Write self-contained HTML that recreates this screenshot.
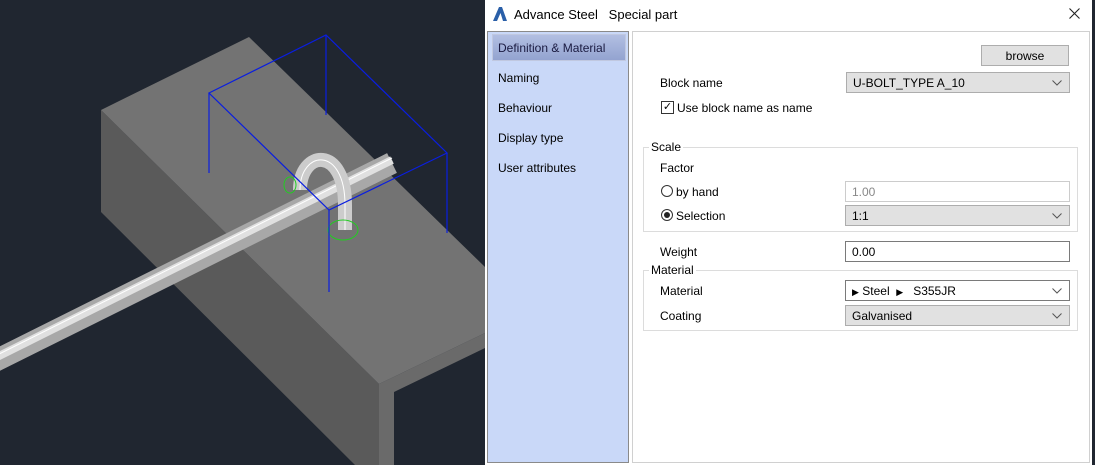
<!DOCTYPE html>
<html><head><meta charset="utf-8"><style>
body{margin:0;width:1095px;height:465px;overflow:hidden;background:#202630;font-family:"Liberation Sans",sans-serif;font-size:12px;color:#000;position:relative}
.a{position:absolute}
.dlg{left:485px;top:0;width:607px;height:465px;background:#fff}
.nav{left:487px;top:31px;width:142px;height:432px;background:#c9d8f8;border:1px solid #8a8a8a;box-sizing:border-box}
.it{position:absolute;left:10px}
.sel{position:absolute;left:4px;top:2px;width:134px;height:27px;background:linear-gradient(#b2bfe2,#93a3d0);border:1px solid #c0c8e0;box-sizing:border-box}
.cont{left:632px;top:31px;width:458px;height:432px;border:1px solid #d0d0d0;box-sizing:border-box;background:#fff}
.box{position:absolute;box-sizing:border-box;border:1px solid #adadad;background:#fff;height:21px;padding:3px 6px;font-size:12px}
.cb{background:#e1e1e1}
.chev{position:absolute;right:7px;top:7px;width:10px;height:6px}
.grp{position:absolute;border:1px solid #dcdcdc;box-sizing:border-box}
.gl{position:absolute;background:#fff;padding:0 2px}
.rad{position:absolute;width:12px;height:12px;border:1px solid #333;border-radius:50%;box-sizing:border-box;background:#fff}
</style></head><body>
<svg class="a" style="left:0;top:0" width="485" height="465">
<polygon points="101,110 379,384 379,465 355,465 101,212" fill="#5a5a5a"/>
<polygon points="379,384 485,333 485,348 394,392 394,465 379,465" fill="#6a6a6a"/>
<polygon points="101,110 249,37 485,267 485,333 379,384" fill="#737373"/>
<defs><linearGradient id="pg" x1="0" y1="0" x2="0.4" y2="1"><stop offset="0" stop-color="#8a8a8a"/><stop offset="0.45" stop-color="#e8e8e8"/><stop offset="1" stop-color="#7a7a7a"/></linearGradient></defs>
<line x1="-5" y1="361" x2="392" y2="163" stroke="#a8a8a8" stroke-width="22"/>
<line x1="-5" y1="358" x2="392" y2="160" stroke="#e0e0e0" stroke-width="8"/>
<line x1="-5" y1="356" x2="392" y2="158" stroke="#fff" stroke-width="1"/>
<path d="M300,190 C300,150 345,145 345,205 L345,230" fill="none" stroke="#ccc" stroke-width="14"/>
<path d="M300,190 C300,150 345,145 345,205 L345,230" fill="none" stroke="#fff" stroke-width="1"/>
<ellipse cx="290" cy="185" rx="6" ry="8" fill="none" stroke="#2c2" stroke-width="1"/>
<ellipse cx="343" cy="230" rx="15" ry="10" fill="none" stroke="#2c2" stroke-width="1"/>
<g stroke="#0a1ee0" stroke-width="1.2" fill="none">
<polygon points="209,93 326,35 447,153 329,210"/>
<line x1="209" y1="93" x2="209" y2="173"/><line x1="326" y1="35" x2="326" y2="115"/>
<line x1="447" y1="153" x2="447" y2="233"/><line x1="329" y1="210" x2="329" y2="292"/>
</g>
</svg>
<div class="a dlg"></div>
<svg class="a" style="left:492px;top:6px" width="16" height="16"><polygon points="1,15 7,1 10,1 15,15 11,15 8.5,7 5,15" fill="#2a5fa8"/></svg>
<div class="a" style="left:514px;top:7px;font-size:13px">Advance Steel&nbsp;&nbsp;&nbsp;Special part</div>
<svg class="a" style="left:1069px;top:8px" width="11" height="11"><path d="M0.5,0.5 L10.5,10.5 M10.5,0.5 L0.5,10.5" stroke="#222" stroke-width="1.1"/></svg>
<div class="a nav">
<div class="sel"></div>
<div class="it" style="top:9px;color:#1a1a40">Definition &amp; Material</div>
<div class="it" style="top:39px">Naming</div>
<div class="it" style="top:69px">Behaviour</div>
<div class="it" style="top:99px">Display type</div>
<div class="it" style="top:129px">User attributes</div>
</div>
<div class="a cont"></div>
<div class="box cb" style="left:981px;top:45px;width:88px;text-align:center">browse</div>
<div class="a" style="left:660px;top:76px">Block name</div>
<div class="box cb" style="left:846px;top:72px;width:224px">U-BOLT_TYPE A_10<svg class="chev"><path d="M0.5,0.5 L5,5 L9.5,0.5" fill="none" stroke="#555"/></svg></div>
<div class="a" style="left:661px;top:101px;width:13px;height:13px;border:1px solid #333;box-sizing:border-box;font-size:11px;line-height:11px;text-align:center">✓</div>
<div class="a" style="left:677px;top:101px">Use block name as name</div>
<div class="grp" style="left:643px;top:147px;width:435px;height:85px"></div>
<div class="gl" style="left:649px;top:140px">Scale</div>
<div class="a" style="left:660px;top:161px">Factor</div>
<div class="rad" style="left:661px;top:185px"></div><div class="a" style="left:676px;top:185px">by hand</div>
<div class="box" style="left:845px;top:181px;width:225px;color:#888;border-color:#ccc">1.00</div>
<div class="rad" style="left:661px;top:209px"><div style="position:absolute;left:2px;top:2px;width:6px;height:6px;border-radius:50%;background:#222"></div></div>
<div class="a" style="left:676px;top:209px">Selection</div>
<div class="box cb" style="left:845px;top:205px;width:225px">1:1<svg class="chev"><path d="M0.5,0.5 L5,5 L9.5,0.5" fill="none" stroke="#555"/></svg></div>
<div class="a" style="left:660px;top:245px">Weight</div>
<div class="box" style="left:845px;top:241px;width:225px;border-color:#7a7a7a">0.00</div>
<div class="grp" style="left:643px;top:270px;width:435px;height:61px"></div>
<div class="gl" style="left:649px;top:263px">Material</div>
<div class="a" style="left:660px;top:284px">Material</div>
<div class="box" style="left:845px;top:280px;width:225px;border-color:#7a7a7a"><span style="font-size:9px">▶</span> Steel &nbsp;<span style="font-size:9px">▶</span> &nbsp;&nbsp;S355JR<svg class="chev"><path d="M0.5,0.5 L5,5 L9.5,0.5" fill="none" stroke="#555"/></svg></div>
<div class="a" style="left:660px;top:309px">Coating</div>
<div class="box cb" style="left:845px;top:305px;width:225px">Galvanised<svg class="chev"><path d="M0.5,0.5 L5,5 L9.5,0.5" fill="none" stroke="#555"/></svg></div>
</body></html>
